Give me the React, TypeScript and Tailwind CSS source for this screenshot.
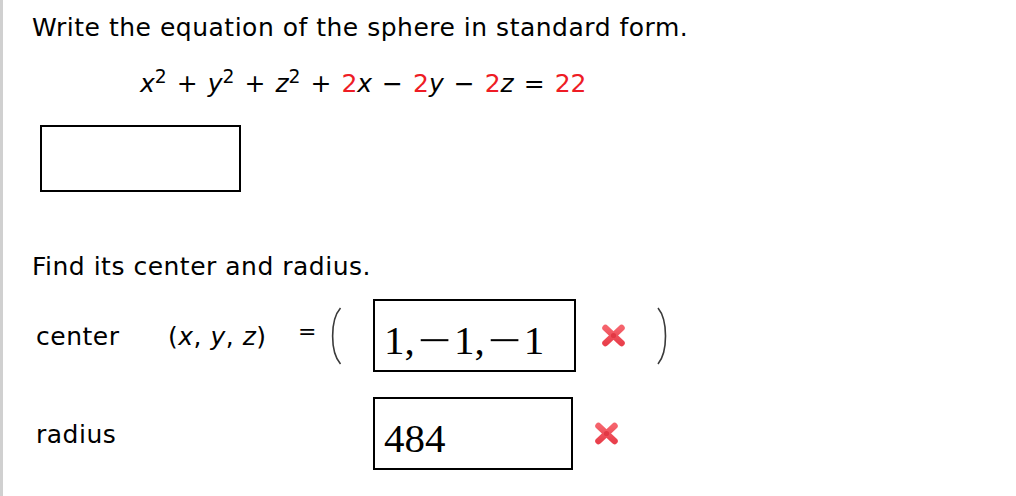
import React from "react";

function RedX() {
  return (
    <svg width="27" height="25" viewBox="0 0 27 25" className="block">
      <defs>
        <linearGradient id="xg" x1="0" y1="0" x2="0" y2="1">
          <stop offset="0" stopColor="#f5636c" />
          <stop offset="1" stopColor="#e9404c" />
        </linearGradient>
      </defs>
      <g stroke="url(#xg)" strokeWidth="6.5" strokeLinecap="round">
        <line x1="5.5" y1="5" x2="21.5" y2="20" />
        <line x1="21.5" y1="5" x2="5.5" y2="20" />
      </g>
      <circle cx="13.5" cy="12.5" r="2.6" fill="#e23844" />
    </svg>
  );
}

function LeftParen() {
  return (
    <svg width="15" height="58" viewBox="0 0 15 58" className="block">
      <path d="M13.5 1 C3 13, 3 45, 13.5 57" fill="none" stroke="#3a3a3a" strokeWidth="1.6" />
    </svg>
  );
}

function RightParen() {
  return (
    <svg width="13" height="58" viewBox="0 0 13 58" className="block">
      <path d="M1 1 C11 13, 11 45, 1 57" fill="none" stroke="#3a3a3a" strokeWidth="1.6" />
    </svg>
  );
}

function Minus() {
  return <span className="mx-[8px] inline-block scale-x-[1.45]">−</span>;
}

function Op({ children }: { children: React.ReactNode }) {
  return <span className="mx-[10px] inline-block">{children}</span>;
}

export default function App() {
  const red = "text-[#ee1c25]";
  return (
    <div className="min-h-[496px] w-full border-l-[3px] border-[#d0d0d0] bg-white pl-[29px] pt-[14px] font-['DejaVu_Sans','Noto_Sans',sans-serif] text-[25px] leading-[28px] tracking-[0.5px] text-black">
      <p>Write the equation of the sphere in standard form.</p>

      <p className="mt-[28px] whitespace-nowrap pl-[108px] tracking-normal">
        <span className="italic">x</span>
        <sup>2</sup>
        <Op>+</Op>
        <span className="italic">y</span>
        <sup>2</sup>
        <Op>+</Op>
        <span className="italic">z</span>
        <sup>2</sup>
        <Op>+</Op>
        <span className={red}>2</span>
        <span className="italic">x</span>
        <Op>−</Op>
        <span className={red}>2</span>
        <span className="italic">y</span>
        <Op>−</Op>
        <span className={red}>2</span>
        <span className="italic">z</span>
        <Op>=</Op>
        <span className={red}>22</span>
      </p>

      <div className="ml-[8px] mt-[27px] h-[67px] w-[201px] border-2 border-black" />

      <p className="mt-[61px]">Find its center and radius.</p>

      <div className="mt-[18px] flex items-center">
        <span className="ml-[4px] mt-[3px] w-[132px]">center</span>
        <span className="mt-[3px] w-[130px]">
          (<span className="italic">x</span>, <span className="italic">y</span>, <span className="italic">z</span>)
        </span>
        <span className="w-[29px] pb-[8px] text-[22px] leading-[22px]">=</span>
        <LeftParen />
        <div className="ml-[31px] h-[73px] w-[203px] border-2 border-black pl-[9px] pt-[19px] font-['Liberation_Serif',serif] text-[41px] leading-[41px] tracking-normal">
          1,<Minus />1,<Minus />1
        </div>
        <div className="ml-[24px]">
          <RedX />
        </div>
        <div className="ml-[30px]">
          <RightParen />
        </div>
      </div>

      <div className="mt-[25px] flex items-center">
        <span className="ml-[4px] mt-[3px] w-[337px]">radius</span>
        <div className="h-[73px] w-[200px] border-2 border-black pl-[9px] pt-[19px] font-['Liberation_Serif',serif] text-[41px] leading-[41px] tracking-normal">
          484
        </div>
        <div className="ml-[20px]">
          <RedX />
        </div>
      </div>
    </div>
  );
}
